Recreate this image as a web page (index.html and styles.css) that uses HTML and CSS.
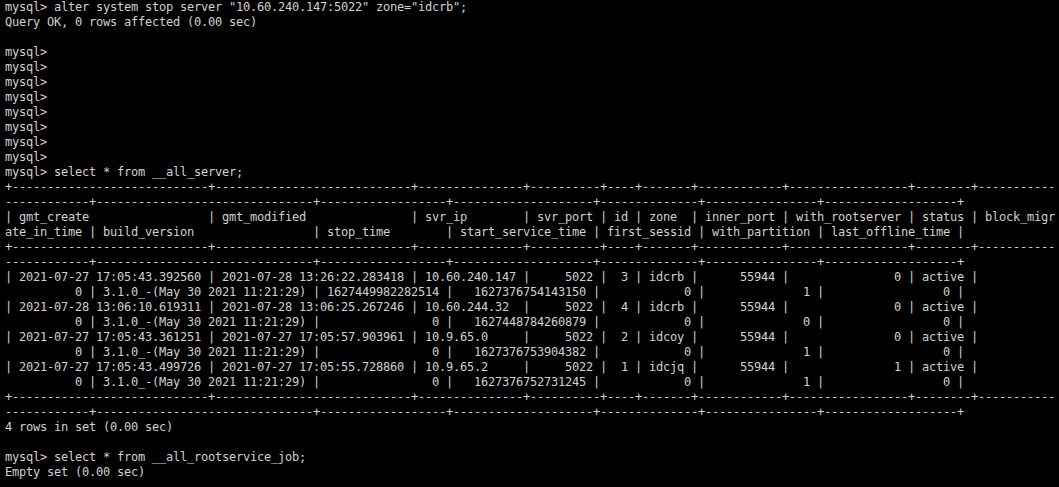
FILE: index.html
```html
<!DOCTYPE html>
<html lang="en">
<head>
<meta charset="utf-8">
<title>mysql terminal</title>
<link rel="stylesheet" href="styles.css">
</head>
<body>
<pre class="term">mysql&gt; alter system stop server "10.60.240.147:5022" zone="idcrb";
Query OK, 0 rows affected (0.00 sec)

mysql&gt;
mysql&gt;
mysql&gt;
mysql&gt;
mysql&gt;
mysql&gt;
mysql&gt;
mysql&gt;
mysql&gt; select * from __all_server;
+----------------------------+----------------------------+---------------+----------+----+-------+------------+-----------------+--------+-----------
------------+-------------------------------+------------------+--------------------+--------------+----------------+-------------------+
| gmt_create                 | gmt_modified               | svr_ip        | svr_port | id | zone  | inner_port | with_rootserver | status | block_migr
ate_in_time | build_version                 | stop_time        | start_service_time | first_sessid | with_partition | last_offline_time |
+----------------------------+----------------------------+---------------+----------+----+-------+------------+-----------------+--------+-----------
------------+-------------------------------+------------------+--------------------+--------------+----------------+-------------------+
| 2021-07-27 17:05:43.392560 | 2021-07-28 13:26:22.283418 | 10.60.240.147 |     5022 |  3 | idcrb |      55944 |               0 | active |
          0 | 3.1.0_-(May 30 2021 11:21:29) | 1627449982282514 |   1627376754143150 |            0 |              1 |                 0 |
| 2021-07-28 13:06:10.619311 | 2021-07-28 13:06:25.267246 | 10.60.244.32  |     5022 |  4 | idcrb |      55944 |               0 | active |
          0 | 3.1.0_-(May 30 2021 11:21:29) |                0 |   1627448784260879 |            0 |              0 |                 0 |
| 2021-07-27 17:05:43.361251 | 2021-07-27 17:05:57.903961 | 10.9.65.0     |     5022 |  2 | idcoy |      55944 |               0 | active |
          0 | 3.1.0_-(May 30 2021 11:21:29) |                0 |   1627376753904382 |            0 |              1 |                 0 |
| 2021-07-27 17:05:43.499726 | 2021-07-27 17:05:55.728860 | 10.9.65.2     |     5022 |  1 | idcjq |      55944 |               1 | active |
          0 | 3.1.0_-(May 30 2021 11:21:29) |                0 |   1627376752731245 |            0 |              1 |                 0 |
+----------------------------+----------------------------+---------------+----------+----+-------+------------+-----------------+--------+-----------
------------+-------------------------------+------------------+--------------------+--------------+----------------+-------------------+
4 rows in set (0.00 sec)

mysql&gt; select * from __all_rootservice_job;
Empty set (0.00 sec)</pre>
</body>
</html>
```

FILE: styles.css
```css
html, body {
  margin: 0;
  padding: 0;
  background: #000;
}

body {
  width: 1059px;
  height: 487px;
  overflow: hidden;
}

.term {
  margin: 0;
  padding: 0 0 0 5px;
  font-family: "DejaVu Sans Mono", "Liberation Mono", monospace;
  font-size: 12px;
  letter-spacing: -0.2246px;
  line-height: 15px;
  color: #d0d0d0;
  white-space: pre;
}
```
